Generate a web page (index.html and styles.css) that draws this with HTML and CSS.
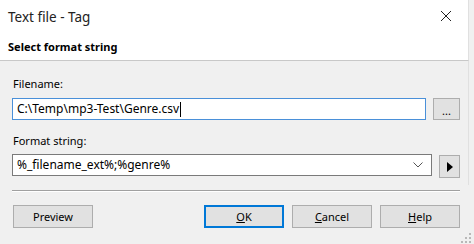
FILE: index.html
```html
<!DOCTYPE html>
<html>
<head>
<meta charset="utf-8">
<link rel="stylesheet" href="styles.css">
</head>
<body>
<div class="dialog">
  <div class="header">
    <div class="titlebar">
      <span class="title">Text file - Tag</span>
      <svg class="close" width="12" height="12" viewBox="0 0 12 12"><path d="M1 1 L11 11 M11 1 L1 11" stroke="#222" stroke-width="1" fill="none"/></svg>
    </div>
    <div class="subtitle">Select format string</div>
  </div>
  <div class="panel">
    <div class="label">Filename:</div>
    <div class="row">
      <div class="input focused">C:\Temp\mp3-Test\Genre.csv<span class="caret"></span></div>
      <div class="btn small">...</div>
    </div>
    <div class="label second">Format string:</div>
    <div class="row">
      <div class="input combo">%_filename_ext%;%genre%
        <svg class="chev" width="10" height="6" viewBox="0 0 10 6"><path d="M0.5 0.5 L5 5 L9.5 0.5" stroke="#555" stroke-width="1" fill="none"/></svg>
      </div>
      <div class="btn arrow"><svg width="6" height="10" viewBox="0 0 6 10"><path d="M0 0 L6 5 L0 10 Z" fill="#000"/></svg></div>
    </div>
  </div>
  <div class="footer">
    <div class="sep"></div>
    <div class="buttons">
      <div class="btn wide">Preview</div>
      <div class="spacer"></div>
      <div class="btn wide default"><u>O</u>K</div>
      <div class="btn wide"><u>C</u>ancel</div>
      <div class="btn wide"><u>H</u>elp</div>
    </div>
    <svg class="grip" width="10" height="10" viewBox="0 0 10 10" fill="#b8b8b8"><rect x="8" y="0" width="2" height="2"/><rect x="4" y="4" width="2" height="2"/><rect x="8" y="4" width="2" height="2"/><rect x="0" y="8" width="2" height="2"/><rect x="4" y="8" width="2" height="2"/><rect x="8" y="8" width="2" height="2"/></svg>
  </div>
</div>
</body>
</html>
```

FILE: styles.css
```css
html, body {
  margin: 0;
  padding: 0;
}
body {
  width: 474px;
  height: 244px;
  overflow: hidden;
  font-family: "Noto Sans", "Open Sans", sans-serif;
  font-size: 11px;
  color: #000;
}
.dialog {
  width: 474px;
  height: 244px;
  background: #f0f0f0;
  position: relative;
}
.header {
  background: #fff;
  height: 61px;
  border-bottom: 1px solid #c8c8c8;
  box-sizing: border-box;
  margin-right: 5px;
  border-right: 1px solid #e0e0e0;
}
.titlebar {
  height: 34px;
  display: flex;
  align-items: center;
  padding-left: 8px;
  padding-right: 16px;
  justify-content: space-between;
}
.title {
  font-size: 13.5px;
  color: #222;
}
.close {
  margin-top: -3px;
}
.subtitle {
  padding-left: 8px;
  font-weight: bold;
  font-size: 11px;
  line-height: 16px;
  margin-top: 5px;
}
.panel {
  padding: 15px 8px 0 12px;
  height: 124px;
  box-sizing: border-box;
  margin-right: 5px;
  border-right: 1px solid #e0e0e0;
}
.label {
  line-height: 16px;
  padding-left: 1px;
  margin-bottom: 6px;
}
.label.second {
  margin-top: 13px;
  margin-bottom: 5px;
}
.row {
  display: flex;
  align-items: flex-start;
  gap: 7px;
}
.input {
  flex: 1;
  height: 22px;
  box-sizing: border-box;
  border: 1px solid #7a7a7a;
  background: #fff;
  padding: 0 4px;
  line-height: 20px;
  display: flex;
  align-items: center;
  font-size: 12px;
}
.input.focused {
  border-color: #4a90d9;
}
.caret {
  display: inline-block;
  width: 1px;
  height: 15px;
  background: #000;
  margin-left: 1px;
}
.combo {
  justify-content: space-between;
}
.chev {
  margin-right: 4px;
}
.btn {
  box-sizing: border-box;
  background: #e1e1e1;
  border: 1px solid #adadad;
  display: flex;
  align-items: center;
  justify-content: center;
  height: 23px;
}
.btn.small {
  width: 27px;
  height: 22px;
  font-size: 11px;
  line-height: 1;
  padding-top: 2px;
}
.btn.arrow {
  width: 21px;
  height: 23px;
  margin-top: 1px;
}
.footer {
  padding: 5px 14px 0 12px;
  position: relative;
}
.sep {
  height: 1px;
  background: #a0a0a0;
  border-bottom: 1px solid #fff;
  margin-bottom: 13px;
}
.buttons {
  display: flex;
  gap: 8px;
  padding-left: 1px;
}
.spacer {
  flex: 1;
}
.btn.wide {
  width: 80px;
}
.btn.default {
  border: 2px solid #0078d7;
}
.grip {
  position: absolute;
  right: 3px;
  top: 48px;
}
```
